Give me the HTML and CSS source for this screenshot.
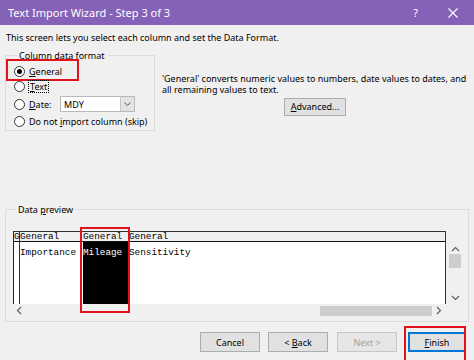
FILE: index.html
```html
<!DOCTYPE html>
<html lang="en">
<head>
  <meta charset="UTF-8" />
  <title>Text Import Wizard - Step 3 of 3</title>
  <link rel="stylesheet" href="styles.css">
</head>
<body>

  <div class="titlebar">
    <span class="title">Text Import Wizard - Step 3 of 3</span>
    <div class="title-btns">
      <span class="help">?</span>
      <svg class="close" width="10" height="10" viewBox="0 0 10 10"><path d="M0.5 0.5 L9.5 9.5 M9.5 0.5 L0.5 9.5" stroke="#fff" stroke-width="1.1" fill="none"/></svg>
    </div>
  </div>

  <div class="dialog">
    <p class="intro">This screen lets you select each column and set the Data Format.</p>

    <div class="top-row">
      <fieldset class="group format-group">
        <legend>Column data format</legend>

        <div class="radio-row marked">
          <span class="radio checked"></span>
          <span><u>G</u>eneral</span>
          <span class="mark mark-general"></span>
        </div>
        <div class="radio-row">
          <span class="radio"></span>
          <span class="focus"><u>T</u>ext</span>
        </div>
        <div class="radio-row date-row">
          <span class="radio"></span>
          <span class="date-label"><u>D</u>ate:</span>
          <div class="select">
            <span class="select-value">MDY</span>
            <span class="select-btn">
              <svg width="7" height="4" viewBox="0 0 7 4"><path d="M0.5 0.5 L3.5 3.5 L6.5 0.5" stroke="#555" fill="none"/></svg>
            </span>
          </div>
        </div>
        <div class="radio-row">
          <span class="radio"></span>
          <span>Do not <u>i</u>mport column (skip)</span>
        </div>
      </fieldset>

      <div class="desc">
        <p>'General' converts numeric values to numbers, date values to dates, and all remaining values to text.</p>
        <button class="btn advanced"><u>A</u>dvanced...</button>
      </div>
    </div>

    <fieldset class="group preview-group">
      <legend>Data <u>p</u>review</legend>

      <div class="preview">
        <div class="grid">
          <div class="row head">
            <span class="cell c0">G</span>
            <span class="cell c1">General</span>
            <span class="cell c2">General</span>
            <span class="cell c3">General</span>
          </div>
          <div class="body">
            <span class="cell c0"></span>
            <span class="cell c1">Importance</span>
            <span class="cell c2 sel">Mileage</span>
            <span class="cell c3">Sensitivity</span>
          </div>
          <span class="mark mark-col"></span>
        </div>

        <div class="vscroll">
          <svg width="9" height="6" viewBox="0 0 9 6"><path d="M1 5 L4.5 1.5 L8 5" stroke="#606060" stroke-width="1.2" fill="none"/></svg>
          <span class="vthumb"></span>
          <span class="vspace"></span>
          <svg width="9" height="6" viewBox="0 0 9 6"><path d="M1 1 L4.5 4.5 L8 1" stroke="#606060" stroke-width="1.2" fill="none"/></svg>
        </div>

        <div class="hscroll">
          <svg width="6" height="9" viewBox="0 0 6 9"><path d="M5 1 L1.5 4.5 L5 8" stroke="#606060" stroke-width="1.2" fill="none"/></svg>
          <span class="hthumb"></span>
          <svg width="6" height="9" viewBox="0 0 6 9"><path d="M1 1 L4.5 4.5 L1 8" stroke="#606060" stroke-width="1.2" fill="none"/></svg>
        </div>
      </div>
    </fieldset>

    <div class="buttons">
      <button class="btn">Cancel</button>
      <button class="btn">&lt; <u>B</u>ack</button>
      <button class="btn" disabled>Next &gt;</button>
      <button class="btn finish"><u>F</u>inish<span class="mark mark-finish"></span></button>
    </div>
  </div>

</body>
</html>
```

FILE: styles.css
```css
body {
  margin: 0;
  width: 474px;
  height: 360px;
  overflow: hidden;
  background: #f0f0f0;
  font-family: 'Noto Sans', 'Open Sans', sans-serif;
  font-size: 9px;
  color: #000;
}

.titlebar {
  height: 25px;
  background: #8661b8;
  color: #fff;
  display: flex;
  align-items: center;
  justify-content: space-between;
  padding: 0 16px 0 8px;
}

.title {
  font-size: 11px;
}

.title-btns {
  display: flex;
  align-items: center;
  gap: 30px;
}

.help {
  font-size: 11px;
}

.dialog {
  padding: 0 6px;
}

.intro {
  margin: 6px 0 0;
  line-height: 13px;
}

.top-row {
  display: flex;
  margin-top: 5px;
}

.group {
  margin: 0;
  border: 1px solid #dcdcdc;
  min-width: 0;
}

.group legend {
  padding: 0 2px;
  margin-left: 3px;
  line-height: 13px;
}

.format-group {
  width: 150px;
  box-sizing: border-box;
  margin-left: -1px;
  padding: 2px 4px 1px 8px;
}

.radio-row {
  display: flex;
  align-items: center;
  height: 15px;
  gap: 4px;
  position: relative;
  white-space: nowrap;
}

.radio {
  flex: none;
  width: 9px;
  height: 9px;
  border: 1px solid #333;
  border-radius: 50%;
  background: #fff;
  display: flex;
  align-items: center;
  justify-content: center;
}

.radio.checked::after {
  content: "";
  width: 5px;
  height: 5px;
  border-radius: 50%;
  background: #000;
}

.focus {
  outline: 1px dotted #000;
  padding: 0 1px;
  line-height: 11px;
}

.date-row {
  height: 17px;
  margin: 1.5px 0;
}

.date-label {
  width: 27px;
}

.select {
  width: 75px;
  height: 16px;
  box-sizing: border-box;
  border: 1px solid #b9b9b9;
  background: #fff;
  display: flex;
  align-items: center;
}

.select-value {
  flex: 1;
  padding-left: 3px;
}

.select-btn {
  width: 13px;
  height: 14px;
  background: #e3e3e3;
  border-left: 1px solid #c8c8c8;
  display: flex;
  align-items: center;
  justify-content: center;
}

.desc {
  width: 306px;
  margin-left: 7px;
  display: flex;
  flex-direction: column;
}

.desc p {
  margin: 24px 0 0;
  line-height: 11px;
}

.btn {
  font-family: inherit;
  font-size: 9px;
  color: #000;
  background: #e1e1e1;
  border: 1px solid #adadad;
  height: 20px;
  width: 60px;
  padding: 0;
  position: relative;
}

.btn:disabled {
  color: #a0a0a0;
  background: #e6e6e6;
  border-color: #c6c6c6;
}

.advanced {
  align-self: center;
  width: 62px;
  height: 18px;
  margin-top: 2.5px;
}

.preview-group {
  margin-top: 72px;
  margin-left: -1px;
  margin-right: -1px;
  padding: 15px 4px 5px 7px;
}

.preview {
  display: grid;
  grid-template-columns: 433px 16px;
  grid-template-rows: 11px 62px 12px;
}

.grid {
  grid-column: 1;
  grid-row: 1 / 3;
  position: relative;
  border-left: 1px solid #222;
  border-right: 1px solid #333;
  font-family: 'Liberation Mono', monospace;
  font-size: 9.33px;
  display: flex;
  flex-direction: column;
}

.row,
.body {
  display: flex;
}

.head {
  line-height: 10px;
  border-top: 1px solid #333;
  border-bottom: 1px solid #111;
  box-sizing: border-box;
  height: 11px;
}

.body {
  flex: 1;
  background: #fff;
  line-height: 11px;
}

.cell {
  white-space: nowrap;
  overflow: hidden;
}

.c0 {
  width: 5px;
  border-right: 1px solid #333;
}

.c1 {
  width: 63px;
}

.c2 {
  width: 45px;
}

.c3 {
  flex: 1;
  padding-left: 1px;
}

.body .cell {
  padding-top: 5px;
}

.body .sel {
  background: #000;
  color: #fff;
}

.vscroll {
  grid-column: 2;
  grid-row: 2;
  display: flex;
  flex-direction: column;
  align-items: center;
  padding: 4px 0 3px 2px;
}

.vthumb {
  width: 12px;
  height: 14px;
  background: #cdcdcd;
  margin-top: 2px;
}

.vspace {
  flex: 1;
}

.hscroll {
  grid-column: 1;
  grid-row: 3;
  display: flex;
  align-items: center;
  padding: 0 4px 0 3px;
}

.hthumb {
  width: 112px;
  height: 10px;
  background: #cdcdcd;
  margin: 2px 4px 0 auto;
}

.buttons {
  display: flex;
  justify-content: flex-end;
  gap: 8px;
  margin-top: 10px;
  padding-right: 2px;
}

.buttons .btn:nth-child(3) {
  margin-left: 1px;
}

.finish {
  width: 58px;
  margin-left: 3px;
  border: 1px solid #0078d7;
  box-shadow: inset 0 0 0 1px #0078d7;
}

.mark {
  position: absolute;
  border: 2px solid #e0121b;
}

.mark-general {
  left: -8px;
  top: -5px;
  width: 69px;
  height: 18px;
}

.mark-col {
  left: 66px;
  top: -4px;
  width: 46px;
  height: 82px;
}

.mark-finish {
  left: -5px;
  top: -7px;
  width: 58px;
  height: 32px;
}
```
